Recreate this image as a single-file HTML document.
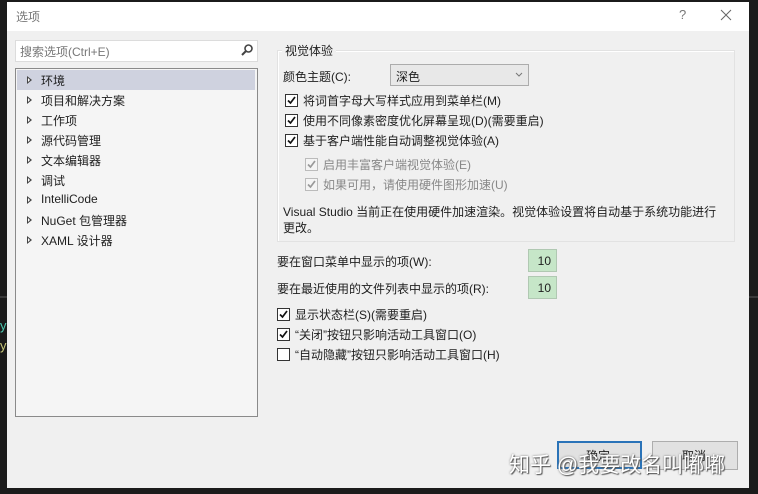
<!DOCTYPE html>
<html><head><meta charset="utf-8"><style>
*{margin:0;padding:0;box-sizing:border-box}
body{width:758px;height:494px;background:#1b1b1b;position:relative;overflow:hidden;font-family:"Liberation Sans","Noto Sans CJK SC",sans-serif;font-size:12px;color:#1e1e1e}
.a{position:absolute;white-space:nowrap}
.dlg{position:absolute;left:7px;top:2px;width:742px;height:486px;background:#f0f0f0}
.tb{position:absolute;left:7px;top:2px;width:742px;height:29px;background:#fff}
.cb{position:absolute;width:13px;height:13px;border:1px solid #333;background:#fff}
.cb svg{position:absolute;left:0;top:0}
.cb.d{border-color:#bbb;background:#f4f4f4}
.tri{position:absolute;width:0;height:0;border-top:4px solid transparent;border-bottom:4px solid transparent;border-left:5px solid #444}
.tri:after{content:"";position:absolute;left:-4px;top:-2px;border-top:2px solid transparent;border-bottom:2px solid transparent;border-left:2px solid #fff}
</style></head><body>
<div class="a" style="left:0;top:296px;width:7px;height:2px;background:#3a3a3a"></div>
<div class="a" style="left:749px;top:296px;width:9px;height:2px;background:#3a3a3a"></div>
<div class="a" style="left:0;top:318px;color:#4ec9b0;font-size:13px">y</div>
<div class="a" style="left:0;top:338px;color:#c8c87a;font-size:13px">y</div>
<div class="dlg"></div>
<div class="tb"></div>
<div class="a" style="left:16px;top:8px;color:#777;font-size:12px">选项</div>
<div class="a" style="left:679px;top:7px;color:#777;font-size:13px">?</div>
<svg class="a" style="left:720px;top:9px" width="12" height="12"><path d="M1 1L11 11M11 1L1 11" stroke="#666" stroke-width="1"/></svg>

<div class="a" style="left:15px;top:40px;width:243px;height:22px;background:#fff;border:1px solid #dcdcdc"></div>
<div class="a" style="left:20px;top:43px;color:#777">搜索选项(Ctrl+E)</div>
<svg class="a" style="left:240px;top:43px" width="14" height="14"><circle cx="8.5" cy="5.5" r="3.5" fill="none" stroke="#444" stroke-width="1.6"/><path d="M6 8L2 12" stroke="#444" stroke-width="2"/></svg>

<div class="a" style="left:15px;top:68px;width:243px;height:349px;background:#f5f5f5;border:1px solid #8a8a8a"></div>
<div class="a" style="left:17px;top:70px;width:238px;height:20px;background:#cfd2df"></div>
<div class="tri" style="left:27px;top:76px"></div><div class="a" style="left:41px;top:72px">环境</div>
<div class="tri" style="left:27px;top:96px"></div><div class="a" style="left:41px;top:92px">项目和解决方案</div>
<div class="tri" style="left:27px;top:116px"></div><div class="a" style="left:41px;top:112px">工作项</div>
<div class="tri" style="left:27px;top:136px"></div><div class="a" style="left:41px;top:132px">源代码管理</div>
<div class="tri" style="left:27px;top:156px"></div><div class="a" style="left:41px;top:152px">文本编辑器</div>
<div class="tri" style="left:27px;top:176px"></div><div class="a" style="left:41px;top:172px">调试</div>
<div class="tri" style="left:27px;top:196px"></div><div class="a" style="left:41px;top:192px">IntelliCode</div>
<div class="tri" style="left:27px;top:216px"></div><div class="a" style="left:41px;top:212px">NuGet 包管理器</div>
<div class="tri" style="left:27px;top:236px"></div><div class="a" style="left:41px;top:232px">XAML 设计器</div>

<div class="a" style="left:277px;top:50px;width:458px;height:192px;border:1px solid #e2e2e2;box-shadow:inset 1px 1px 0 #fff"></div>
<div class="a" style="left:282px;top:42px;background:#f0f0f0;padding:0 3px">视觉体验</div>
<div class="a" style="left:283px;top:68px">颜色主题(C):</div>
<div class="a" style="left:390px;top:64px;width:139px;height:22px;background:#e8e8e8;border:1px solid #acacac"></div>
<div class="a" style="left:396px;top:68px">深色</div>
<svg class="a" style="left:515px;top:72px" width="8" height="6"><path d="M1 1L4 4L7 1" fill="none" stroke="#777"/></svg>

<div class="cb" style="left:285px;top:94px"><svg width="11" height="11"><path d="M2 5.5L4.5 8L9 2" fill="none" stroke="#111" stroke-width="1.7"/></svg></div>
<div class="a" style="left:303px;top:92px">将词首字母大写样式应用到菜单栏(M)</div>
<div class="cb" style="left:285px;top:114px"><svg width="11" height="11"><path d="M2 5.5L4.5 8L9 2" fill="none" stroke="#111" stroke-width="1.7"/></svg></div>
<div class="a" style="left:303px;top:112px">使用不同像素密度优化屏幕呈现(D)(需要重启)</div>
<div class="cb" style="left:285px;top:134px"><svg width="11" height="11"><path d="M2 5.5L4.5 8L9 2" fill="none" stroke="#111" stroke-width="1.7"/></svg></div>
<div class="a" style="left:303px;top:132px">基于客户端性能自动调整视觉体验(A)</div>
<div class="cb d" style="left:305px;top:158px"><svg width="11" height="11"><path d="M2 5.5L4.5 8L9 2" fill="none" stroke="#999" stroke-width="1.7"/></svg></div>
<div class="a" style="left:323px;top:156px;color:#888">启用丰富客户端视觉体验(E)</div>
<div class="cb d" style="left:305px;top:178px"><svg width="11" height="11"><path d="M2 5.5L4.5 8L9 2" fill="none" stroke="#999" stroke-width="1.7"/></svg></div>
<div class="a" style="left:323px;top:176px;color:#888">如果可用，请使用硬件图形加速(U)</div>
<div class="a" style="left:283px;top:203px">Visual Studio 当前正在使用硬件加速渲染。视觉体验设置将自动基于系统功能进行</div>
<div class="a" style="left:283px;top:219px">更改。</div>

<div class="a" style="left:277px;top:253px">要在窗口菜单中显示的项(W):</div>
<div class="a" style="left:528px;top:249px;width:29px;height:23px;background:#c6e6c8;border:1px solid #b0c8b2;text-align:right;padding:4px 5px 0 0">10</div>
<div class="a" style="left:277px;top:280px">要在最近使用的文件列表中显示的项(R):</div>
<div class="a" style="left:528px;top:276px;width:29px;height:23px;background:#c6e6c8;border:1px solid #b0c8b2;text-align:right;padding:4px 5px 0 0">10</div>

<div class="cb" style="left:277px;top:308px"><svg width="11" height="11"><path d="M2 5.5L4.5 8L9 2" fill="none" stroke="#111" stroke-width="1.7"/></svg></div>
<div class="a" style="left:295px;top:306px">显示状态栏(S)(需要重启)</div>
<div class="cb" style="left:277px;top:328px"><svg width="11" height="11"><path d="M2 5.5L4.5 8L9 2" fill="none" stroke="#111" stroke-width="1.7"/></svg></div>
<div class="a" style="left:295px;top:326px">“关闭”按钮只影响活动工具窗口(O)</div>
<div class="cb" style="left:277px;top:348px"></div>
<div class="a" style="left:295px;top:346px">“自动隐藏”按钮只影响活动工具窗口(H)</div>

<div class="a" style="left:557px;top:441px;width:85px;height:28px;background:#e1e1e1;border:2px solid #2a73b8"></div>
<div class="a" style="left:586px;top:447px">确定</div>
<div class="a" style="left:652px;top:441px;width:86px;height:29px;background:#e1e1e1;border:1px solid #adadad"></div>
<div class="a" style="left:682px;top:447px">取消</div>
<div class="a" style="left:509px;top:449px;font-size:21px;color:#fff;text-shadow:1px 1px 1px #555,0 0 2px #777">知乎 @我要改名叫嘟嘟</div>
</body></html>
